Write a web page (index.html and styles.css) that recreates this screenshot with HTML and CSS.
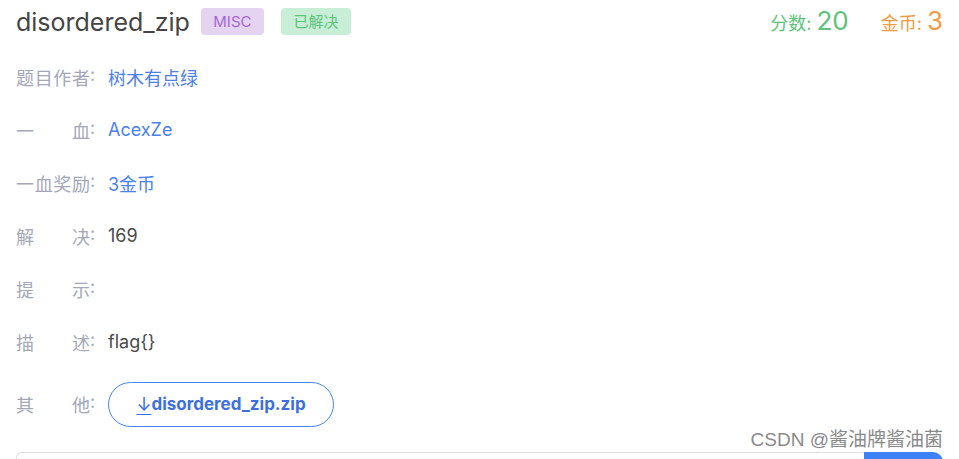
FILE: index.html
```html
<!DOCTYPE html>
<html lang="zh">
<head>
<meta charset="utf-8">
<link rel="stylesheet" href="styles.css">
</head>
<body>
<div class="page">
  <header class="head">
    <div class="title-wrap">
      <h1 class="title">disordered_zip</h1>
      <span class="badge badge-misc">MISC</span>
      <span class="badge badge-solved">已解决</span>
    </div>
    <div class="stats">
      <span class="stat stat-score">分数: <b class="num">20</b></span>
      <span class="stat stat-coin">金币: <b class="num">3</b></span>
    </div>
  </header>
  <div class="rows">
    <div class="row"><span class="label"><span class="lt">题目作者</span>:</span><span class="value link">树木有点绿</span></div>
    <div class="row"><span class="label"><span class="lt">一血</span>:</span><span class="value link">AcexZe</span></div>
    <div class="row"><span class="label"><span class="lt">一血奖励</span>:</span><span class="value link">3金币</span></div>
    <div class="row"><span class="label"><span class="lt">解决</span>:</span><span class="value">169</span></div>
    <div class="row"><span class="label"><span class="lt">提示</span>:</span><span class="value"></span></div>
    <div class="row"><span class="label"><span class="lt">描述</span>:</span><span class="value">flag{}</span></div>
    <div class="row row-other"><span class="label"><span class="lt">其他</span>:</span>
      <a class="dl" href="#"><span class="dl-icon">↓</span>disordered_zip.zip</a>
    </div>
  </div>
  <div class="submit">
    <div class="input"></div>
    <div class="btn"></div>
  </div>
  <div class="watermark">CSDN @酱油牌酱油菌</div>
</div>
</body>
</html>
```

FILE: styles.css
```css
html, body {
  margin: 0;
  padding: 0;
  background: #ffffff;
  overflow: hidden;
}
body {
  font-family: Inter, "Noto Sans CJK SC", sans-serif;
  color: #4a4a4a;
}
.page {
  position: relative;
  width: 959px;
  height: 459px;
  padding: 0 16px;
  box-sizing: border-box;
  overflow: hidden;
}
.head {
  height: 50px;
  display: flex;
  justify-content: space-between;
  align-items: flex-start;
}
.title-wrap {
  display: flex;
  align-items: center;
  height: 43px;
}
.title {
  margin: 0;
  font-size: 25px;
  font-weight: 400;
  color: #454545;
  margin-right: 11px;
}
.badge {
  height: 27px;
  line-height: 27px;
  border-radius: 4px;
  font-size: 15px;
  text-align: center;
  box-sizing: border-box;
}
.badge-misc {
  background: #e4d3f1;
  color: #a768d5;
  width: 63px;
  margin-right: 17px;
}
.badge-solved {
  background: #c8eed7;
  color: #5cc47a;
  width: 70px;
}
.stats {
  display: flex;
  gap: 32px;
  height: 40px;
  align-items: center;
}
.stat {
  font-size: 18px;
}
.stat .num {
  font-weight: 400;
  font-size: 26px;
}
.stat-score { color: #5cc47a; }
.stat-coin { color: #f39a43; }
.row {
  height: 53px;
  display: flex;
  align-items: center;
  font-size: 18px;
}
.label {
  width: 92px;
  display: flex;
  color: #a3a7b7;
  font-size: 18px;
}
.lt {
  width: 74px;
  text-align: justify;
  text-align-last: justify;
}
.value {
  color: #4a4a4a;
}
.link {
  color: #4c80ef;
}
.row-other {
  height: 72px;
}
.dl {
  display: inline-flex;
  align-items: center;
  justify-content: center;
  width: 226px;
  height: 45px;
  box-sizing: border-box;
  border: 1px solid #3f86f2;
  border-radius: 23px;
  color: #3d6fe0;
  font-weight: 700;
  font-size: 17px;
  text-decoration: none;
}
.dl-icon {
  font-weight: 400;
  text-decoration: underline;
  text-underline-offset: 3px;
  font-size: 18px;
}
.submit {
  margin-top: 12px;
  display: flex;
  height: 40px;
}
.input {
  flex: 1;
  border: 1px solid #dcdfe6;
  border-right: none;
  border-radius: 6px 0 0 6px;
}
.btn {
  width: 79px;
  background: #3c82f6;
  border-radius: 0 10px 10px 0;
}
.watermark {
  position: absolute;
  right: 16px;
  top: 428px;
  font-family: "Liberation Sans", "Noto Sans CJK SC", sans-serif;
  font-size: 19px;
  color: #8a8a8a;
  line-height: 24px;
}
```
